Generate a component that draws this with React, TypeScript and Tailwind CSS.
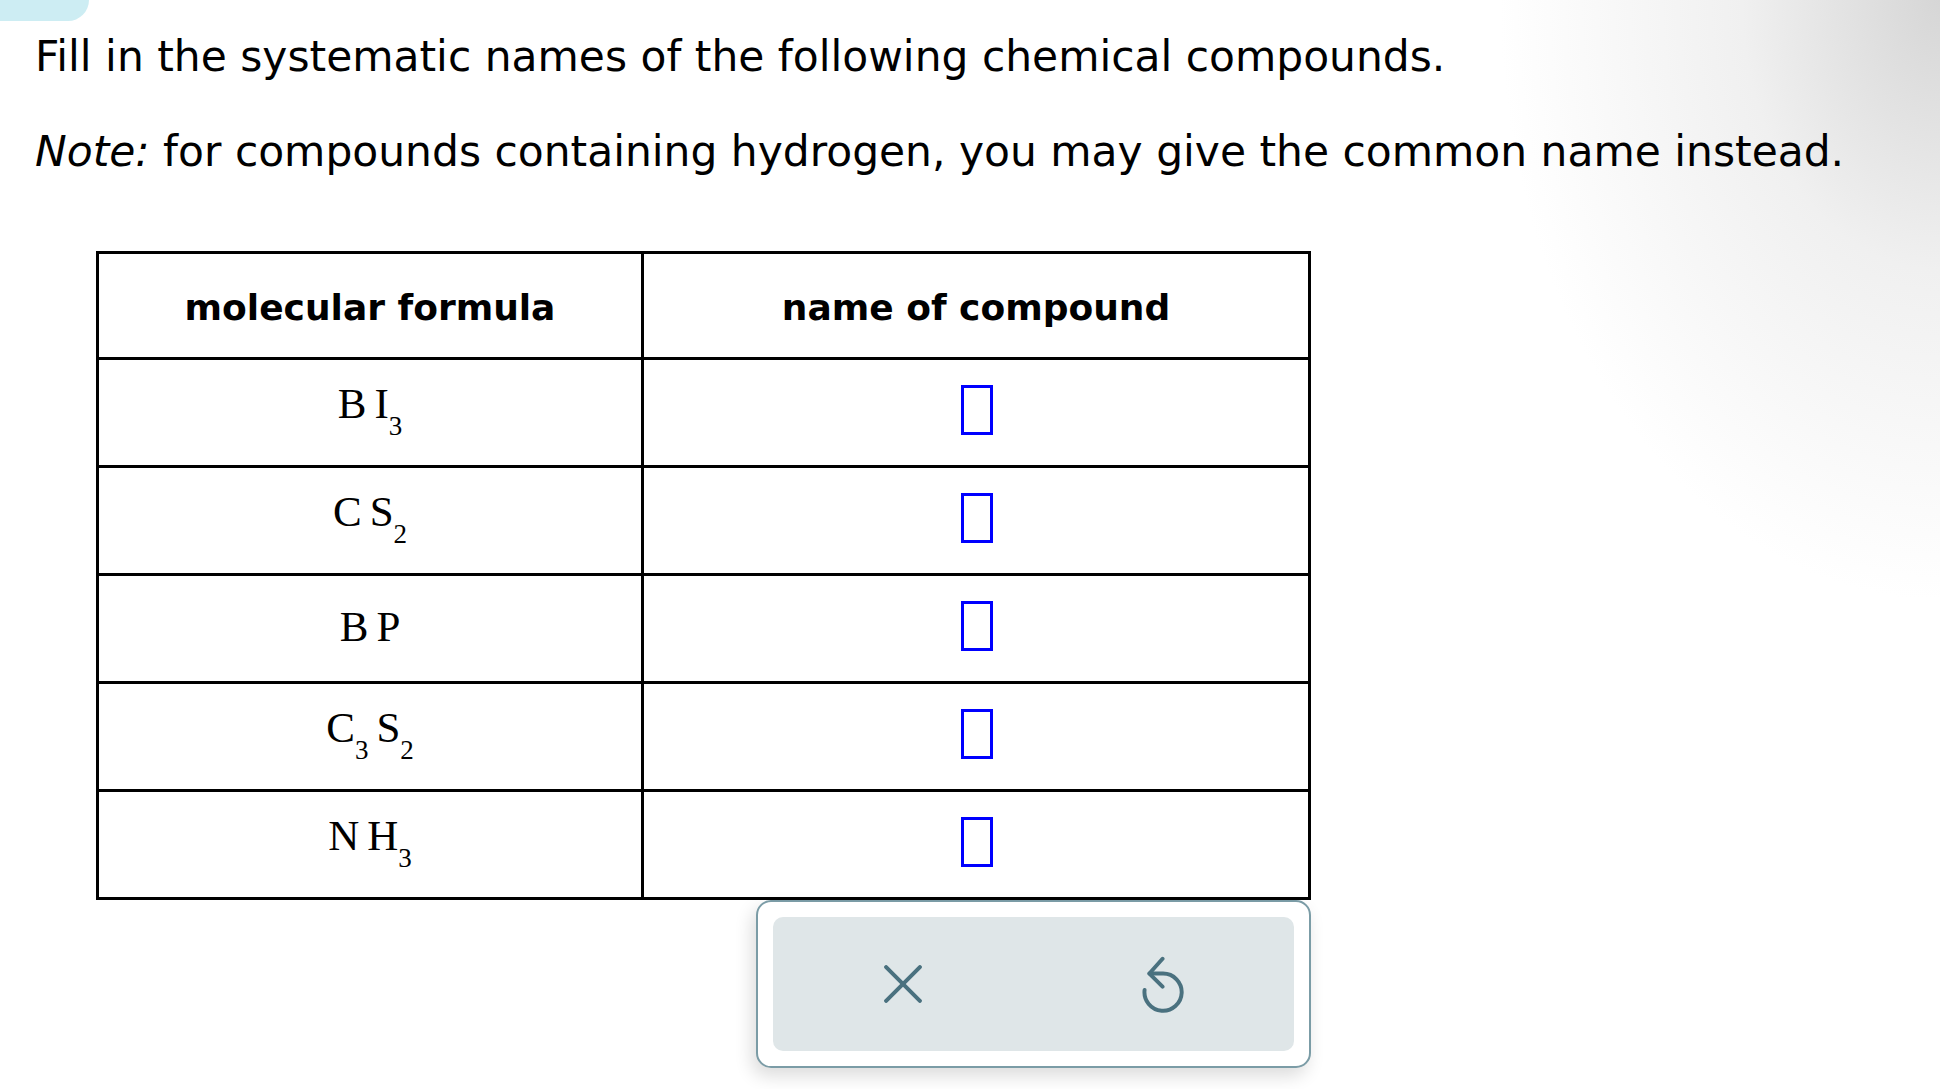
import React from "react";

type Part = [string, string?];

const rows: Part[][] = [
  [["B"], ["I", "3"]],
  [["C"], ["S", "2"]],
  [["B"], ["P"]],
  [["C", "3"], ["S", "2"]],
  [["N"], ["H", "3"]],
];

function Formula({ parts }: { parts: Part[] }) {
  return (
    <span className="inline-flex items-baseline font-['Liberation_Serif',serif] text-[43px] leading-[44px] text-black">
      {parts.map(([sym, sub], i) => (
        <span key={i} className={i < parts.length - 1 ? "mr-[8px]" : ""}>
          {sym}
          {sub ? (
            <span className="text-[27px] align-[-17px] leading-none">{sub}</span>
          ) : null}
        </span>
      ))}
    </span>
  );
}

function XIcon() {
  return (
    <svg width="38" height="38" viewBox="0 0 36 36" fill="none" stroke="#4a717f" strokeWidth="3.8" strokeLinecap="round">
      <line x1="2" y1="2" x2="34" y2="34" />
      <line x1="34" y1="2" x2="2" y2="34" />
    </svg>
  );
}

function UndoIcon() {
  return (
    <svg width="46" height="57" viewBox="0 0 42 52" fill="none" stroke="#4a717f" strokeWidth="3.6" strokeLinecap="round" strokeLinejoin="round">
      <path d="M5.1 31 A17 17 0 1 0 22 16 L9.5 16" />
      <path d="M21.5 2.5 L9.5 16 L21.5 28" />
    </svg>
  );
}

export default function App() {
  return (
    <div className="min-h-screen w-full bg-white bg-[radial-gradient(ellipse_440px_600px_at_100%_0%,#d6d6d6_0%,#f0f0f0_45%,#ffffff_100%)] font-['DejaVu_Sans',sans-serif] text-black">
      <div className="w-[89px] h-[21px] rounded-br-[22px] bg-[#cdedf3]" />
      <div className="pl-[35px]">
        <p className="mt-[11px] text-[42.4px] leading-[49px]">
          Fill in the systematic names of the following chemical compounds.
        </p>
        <p className="mt-[46px] text-[42.4px] leading-[49px]">
          <i>Note:</i> for compounds containing hydrogen, you may give the common name instead.
        </p>
        <div className="ml-[61px] mt-[75px] inline-flex flex-col items-end">
          <table className="w-[1212px] table-fixed border-collapse border-[3px] border-black">
            <colgroup>
              <col className="w-[545px]" />
              <col className="w-[667px]" />
            </colgroup>
            <thead>
              <tr className="h-[106px]">
                <th className="border-[3px] border-black text-center align-middle text-[36px] font-bold leading-[42px] pt-[4px]">
                  molecular formula
                </th>
                <th className="border-[3px] border-black text-center align-middle text-[36px] font-bold leading-[42px] pt-[4px]">
                  name of compound
                </th>
              </tr>
            </thead>
            <tbody>
              {rows.map((parts, i) => (
                <tr key={i} className="h-[108px]">
                  <td className="border-[3px] border-black text-center align-middle pb-[3px]">
                    <Formula parts={parts} />
                  </td>
                  <td className="border-[3px] border-black align-middle">
                    <div className="flex justify-center">
                      <div className="w-[32px] h-[50px] border-[3px] border-[#0000ff] mb-[6px] ml-[1px]" />
                    </div>
                  </td>
                </tr>
              ))}
            </tbody>
          </table>
          <div className="mt-0 w-[555px] h-[168px] rounded-[15px] border-2 border-[#7b9ca6] bg-white p-[15px] shadow-[-4px_8px_18px_rgba(0,0,0,0.14)]">
            <div className="grid h-full grid-cols-2 rounded-[10px] bg-[#dfe6e8]">
              <button className="flex items-center justify-center">
                <XIcon />
              </button>
              <button className="flex items-center justify-center pr-[4px]">
                <UndoIcon />
              </button>
            </div>
          </div>
        </div>
      </div>
    </div>
  );
}
